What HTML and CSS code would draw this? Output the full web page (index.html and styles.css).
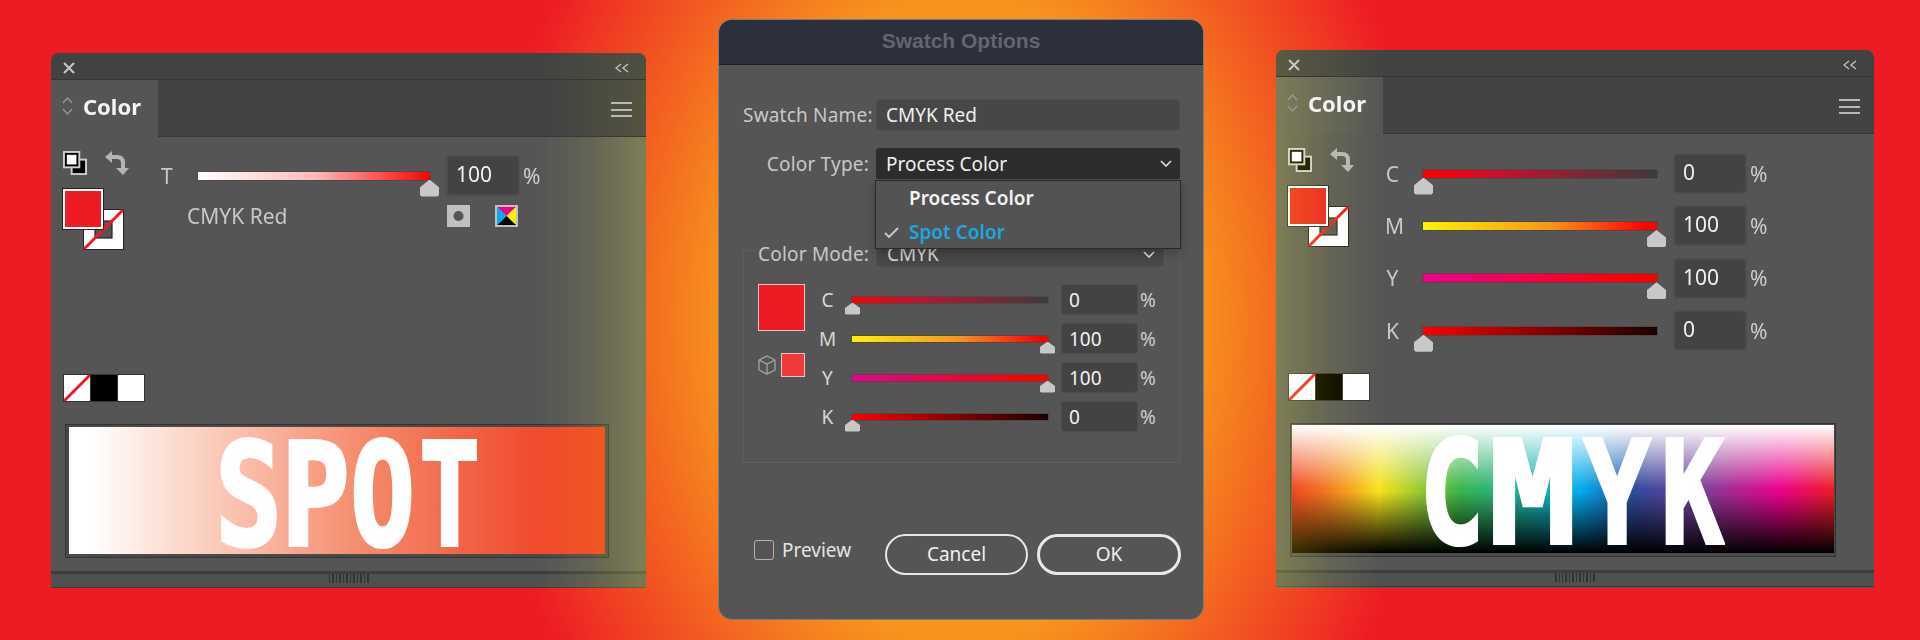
FILE: index.html
```html
<!DOCTYPE html>
<html>

<head>
    <meta charset="UTF-8">
    <title>Swatch Options</title>
    <link rel="stylesheet" href="styles.css">
</head>

<body>
    <div class="page">

        <!-- spot colour panel -->
        <div class="panel panel-spot">
            <div class="panel-title">
                <svg class="icon-close" viewBox="0 0 12 12"><path d="M1 1L11 11M11 1L1 11"/></svg>
                <svg class="icon-collapse" viewBox="0 0 14 10"><path d="M6 1L1 5L6 9M13 1L8 5L13 9"/></svg>
            </div>
            <div class="panel-tabs">
                <div class="tab">
                    <svg class="icon-updown" viewBox="0 0 11 18"><path d="M1 6L5.5 1L10 6M1 12L5.5 17L10 12"/></svg>
                    <span>Color</span>
                </div>
                <div class="tab-rest">
                    <div class="hamburger"><i></i><i></i><i></i></div>
                </div>
            </div>
            <div class="panel-body">
                <div class="tools">
                    <div class="tool-icons">
                        <svg class="icon-default" viewBox="0 0 25 25"><rect x="9" y="9" width="15" height="15" fill="#000" stroke="#ccc" stroke-width="2"/><rect x="1" y="1" width="16" height="16" fill="#000" stroke="#ccc" stroke-width="2"/><rect x="4" y="4" width="10" height="10" fill="#fff"/></svg>
                        <svg class="icon-swap" viewBox="0 0 24 24"><path d="M6 6H12Q18 6 18 12V19" fill="none" stroke="#b4b4b4" stroke-width="4"/><path d="M0 6L7 0V12ZM11 17H24L18 24Z" fill="#b4b4b4"/></svg>
                    </div>
                    <div class="swatch-stack">
                        <svg class="stroke-swatch" viewBox="0 0 41 41"><rect x=".5" y=".5" width="40" height="40" fill="#fff" stroke="#222"/><rect x="12" y="12" width="17" height="17" fill="#555" stroke="#222" stroke-width="1.2"/><path d="M1 40L40 1" stroke="#ed1c24" stroke-width="3"/></svg>
                        <div class="fill-swatch"></div>
                    </div>
                </div>
                <div class="controls">
                    <div class="row row-big">
                        <span class="row-label">T</span>
                        <div class="slider slider-t"><div class="thumb thumb-end"></div></div>
                        <div class="num">100</div>
                        <span class="pct">%</span>
                    </div>
                    <div class="tint-info">
                        <span class="tint-name">CMYK Red</span>
                        <svg class="mode-icon" viewBox="0 0 23 22"><rect width="23" height="22" fill="#c0c0c0"/><circle cx="11.5" cy="11" r="5" fill="#555"/></svg>
                        <svg class="mode-icon" viewBox="0 0 23 22"><rect width="23" height="22" fill="#c0c0c0"/><path d="M2 2H21L11.5 11Z" fill="#ec008c"/><path d="M21 2V20L11.5 11Z" fill="#fff200"/><path d="M21 20H2L11.5 11Z" fill="#000"/><path d="M2 20V2L11.5 11Z" fill="#00aeef"/></svg>
                    </div>
                </div>
            </div>
            <div class="quick-swatches">
                <svg class="quick-none" viewBox="0 0 26 26" preserveAspectRatio="none"><rect width="26" height="26" fill="#fff"/><path d="M0 26L26 0" stroke="#ed1c24" stroke-width="3"/></svg>
                <div class="quick-black"></div>
                <div class="quick-white"></div>
            </div>
            <div class="preview-frame">
                <div class="preview preview-spot">
                    <div class="word word-spot"><span class="l-s">S</span><span class="l-p">P</span><span class="l-o">O</span><span class="l-t">T</span></div>
                </div>
            </div>
            <div class="panel-foot"><div class="grip"></div></div>
            <div class="tint-overlay"></div>
        </div>

        <!-- dialog -->
        <div class="dialog">
            <div class="dialog-head">Swatch Options</div>
            <div class="dialog-body">
                <div class="form-row">
                    <label class="form-label">Swatch Name:</label>
                    <div class="text-field">CMYK Red</div>
                </div>
                <div class="form-row form-row-type">
                    <label class="form-label">Color Type:</label>
                    <div class="select select-open">
                        <span>Process Color</span>
                        <svg class="chevron" viewBox="0 0 12 7"><path d="M1 1L6 6L11 1"/></svg>
                    </div>
                    <ul class="menu">
                        <li>Process Color</li>
                        <li class="menu-on">
                            <svg class="check" viewBox="0 0 15 11"><path d="M1 6L5 10L14 1"/></svg>
                            Spot Color
                        </li>
                    </ul>
                </div>

                <div class="group">
                    <div class="form-row form-row-mode">
                        <label class="form-label">Color Mode:</label>
                        <div class="select select-mode">
                            <span>CMYK</span>
                            <svg class="chevron" viewBox="0 0 12 7"><path d="M1 1L6 6L11 1"/></svg>
                        </div>
                    </div>
                    <div class="group-main">
                        <div class="group-swatches">
                            <div class="big-swatch"></div>
                            <div class="gamut">
                                <svg class="icon-cube" viewBox="0 0 18 20"><path d="M9 1L17 5V15L9 19L1 15V5ZM1 5L9 9L17 5M9 9V19"/></svg>
                                <div class="small-swatch"></div>
                            </div>
                        </div>
                        <div class="group-rows">
                            <div class="row row-small">
                                <span class="row-label">C</span>
                                <div class="slider slider-c"><div class="thumb thumb-start"></div></div>
                                <div class="num">0</div>
                                <span class="pct">%</span>
                            </div>
                            <div class="row row-small">
                                <span class="row-label">M</span>
                                <div class="slider slider-m"><div class="thumb thumb-end"></div></div>
                                <div class="num">100</div>
                                <span class="pct">%</span>
                            </div>
                            <div class="row row-small">
                                <span class="row-label">Y</span>
                                <div class="slider slider-y"><div class="thumb thumb-end"></div></div>
                                <div class="num">100</div>
                                <span class="pct">%</span>
                            </div>
                            <div class="row row-small">
                                <span class="row-label">K</span>
                                <div class="slider slider-k"><div class="thumb thumb-start"></div></div>
                                <div class="num">0</div>
                                <span class="pct">%</span>
                            </div>
                        </div>
                    </div>
                </div>

                <div class="dialog-foot">
                    <div class="preview-check">
                        <div class="checkbox"></div>
                        <span>Preview</span>
                    </div>
                    <div class="buttons">
                        <div class="btn">Cancel</div>
                        <div class="btn btn-ok">OK</div>
                    </div>
                </div>
            </div>
        </div>

        <!-- cmyk colour panel -->
        <div class="panel panel-cmyk">
            <div class="panel-title">
                <svg class="icon-close" viewBox="0 0 12 12"><path d="M1 1L11 11M11 1L1 11"/></svg>
                <svg class="icon-collapse" viewBox="0 0 14 10"><path d="M6 1L1 5L6 9M13 1L8 5L13 9"/></svg>
            </div>
            <div class="panel-tabs">
                <div class="tab">
                    <svg class="icon-updown" viewBox="0 0 11 18"><path d="M1 6L5.5 1L10 6M1 12L5.5 17L10 12"/></svg>
                    <span>Color</span>
                </div>
                <div class="tab-rest">
                    <div class="hamburger"><i></i><i></i><i></i></div>
                </div>
            </div>
            <div class="panel-body">
                <div class="tools">
                    <div class="tool-icons">
                        <svg class="icon-default" viewBox="0 0 25 25"><rect x="9" y="9" width="15" height="15" fill="#000" stroke="#ccc" stroke-width="2"/><rect x="1" y="1" width="16" height="16" fill="#000" stroke="#ccc" stroke-width="2"/><rect x="4" y="4" width="10" height="10" fill="#fff"/></svg>
                        <svg class="icon-swap" viewBox="0 0 24 24"><path d="M6 6H12Q18 6 18 12V19" fill="none" stroke="#b4b4b4" stroke-width="4"/><path d="M0 6L7 0V12ZM11 17H24L18 24Z" fill="#b4b4b4"/></svg>
                    </div>
                    <div class="swatch-stack">
                        <svg class="stroke-swatch" viewBox="0 0 41 41"><rect x=".5" y=".5" width="40" height="40" fill="#fff" stroke="#222"/><rect x="12" y="12" width="17" height="17" fill="#555" stroke="#222" stroke-width="1.2"/><path d="M1 40L40 1" stroke="#ed1c24" stroke-width="3"/></svg>
                        <div class="fill-swatch"></div>
                    </div>
                </div>
                <div class="controls">
                    <div class="row row-big">
                        <span class="row-label">C</span>
                        <div class="slider slider-c"><div class="thumb thumb-start"></div></div>
                        <div class="num">0</div>
                        <span class="pct">%</span>
                    </div>
                    <div class="row row-big">
                        <span class="row-label">M</span>
                        <div class="slider slider-m"><div class="thumb thumb-end"></div></div>
                        <div class="num">100</div>
                        <span class="pct">%</span>
                    </div>
                    <div class="row row-big">
                        <span class="row-label">Y</span>
                        <div class="slider slider-y"><div class="thumb thumb-end"></div></div>
                        <div class="num">100</div>
                        <span class="pct">%</span>
                    </div>
                    <div class="row row-big">
                        <span class="row-label">K</span>
                        <div class="slider slider-k"><div class="thumb thumb-start"></div></div>
                        <div class="num">0</div>
                        <span class="pct">%</span>
                    </div>
                </div>
            </div>
            <div class="quick-swatches">
                <svg class="quick-none" viewBox="0 0 26 26" preserveAspectRatio="none"><rect width="26" height="26" fill="#fff"/><path d="M0 26L26 0" stroke="#ed1c24" stroke-width="3"/></svg>
                <div class="quick-black"></div>
                <div class="quick-white"></div>
            </div>
            <div class="preview-frame">
                <div class="preview preview-cmyk">
                    <div class="word word-cmyk"><span class="l-c">C</span><span class="l-m">M</span><span class="l-y">Y</span><span class="l-k">K</span></div>
                </div>
            </div>
            <div class="panel-foot"><div class="grip"></div></div>
            <div class="tint-overlay"></div>
        </div>

    </div>
</body>

</html>
```

FILE: styles.css
```css
* {
    margin: 0;
    padding: 0;
    list-style: none;
    box-sizing: border-box;
}

body {
    font-family: "Noto Sans", "Liberation Sans", sans-serif;
    color: #eee;
    overflow: hidden;
}

.page {
    width: 1920px;
    height: 640px;
    display: flex;
    align-items: flex-start;
    padding-left: 51px;
    gap: 72px;
    background: radial-gradient(ellipse 470px 640px at 960px 320px, #f7941e 50%, #ed1c24 100%);
}

/* panels */
.panel {
    position: relative;
    z-index: 0;
    width: 595px;
    height: 535px;
    margin-top: 53px;
    background: #555;
    border-radius: 8px 8px 0 0;
    overflow: hidden;
}

.panel-cmyk {
    width: 598px;
    height: 538px;
    margin-top: 50px;
}

.panel-title {
    height: 27px;
    background: #424242;
    border-bottom: 1px solid #363636;
    display: flex;
    align-items: center;
    justify-content: space-between;
    padding: 4px 17px 0 12px;
}

.panel-spot .panel-title {
    background: linear-gradient(to left, #505040, #424242 18%);
}

.panel-cmyk .panel-title {
    background: linear-gradient(to right, #5a5a42, #424242 18%);
}

.icon-close {
    width: 12px;
    height: 12px;
    fill: none;
    stroke: #c8c8c8;
    stroke-width: 2;
}

.icon-collapse {
    width: 14px;
    height: 10px;
    fill: none;
    stroke: #c0c0c0;
    stroke-width: 1.4;
}

.panel-tabs {
    height: 57px;
    display: flex;
}

.tab {
    width: 107px;
    display: flex;
    align-items: center;
    gap: 10px;
    padding: 0 0 5px 11px;
    background: #555;
    font-size: 22px;
    font-weight: 700;
    color: #f4f4f4;
}

.panel-cmyk .tab {
    background: linear-gradient(to right, #7c7c58, #555 100%);
}

.icon-updown {
    width: 11px;
    height: 18px;
    fill: none;
    stroke: #9a9a9a;
    stroke-width: 1.2;
}

.tab-rest {
    flex: 1;
    background: #434343;
    border-bottom: 1px solid #383838;
    display: flex;
    align-items: center;
    justify-content: flex-end;
    padding: 3px 14px 0 0;
}

.panel-spot .tab-rest {
    background: linear-gradient(to left, #54543f, #434343 18%);
}

.hamburger {
    width: 21px;
    display: flex;
    flex-direction: column;
    gap: 4.5px;
}

.hamburger i {
    display: block;
    height: 2px;
    background: #b8b8b8;
}

.panel-body {
    height: 237px;
    display: flex;
    padding: 14px 0 0 12px;
}

.panel-cmyk .panel-body {
    height: 239px;
}

.tools {
    width: 97px;
}

.tool-icons {
    display: flex;
    gap: 18px;
    height: 25px;
}

.icon-default,
.icon-swap {
    width: 24px;
    height: 24px;
}

.swatch-stack {
    position: relative;
    width: 61px;
    height: 61px;
    margin-top: 13px;
}

.fill-swatch {
    position: absolute;
    left: 0;
    top: 0;
    width: 40px;
    height: 40px;
    background: #ed1c24;
    border: 2px solid #fff;
    box-shadow: 0 0 0 1px #222;
}

.stroke-swatch {
    position: absolute;
    right: 0;
    bottom: 0;
    width: 41px;
    height: 41px;
}

.controls {
    padding-top: 4px;
}

.panel-cmyk .controls {
    padding-top: 5px;
}

.row {
    display: flex;
    align-items: center;
}

.row-big {
    height: 41px;
    margin-bottom: 11.4px;
    font-size: 21px;
}

.row-big .row-label {
    width: 38px;
    padding-left: 1px;
    color: #c8c8c8;
}

.panel-cmyk .row-big .row-label {
    text-align: center;
    padding: 0 23px 0 0;
}

.slider {
    position: relative;
    height: 8px;
    box-shadow: 0 0 0 1px #4a4a4a;
}

.row-big .slider {
    width: 232px;
}

.panel-cmyk .row-big .slider {
    width: 234px;
}

.row-small .slider {
    width: 196px;
    height: 6px;
}

.slider-t { background: linear-gradient(to right, #fff, #fbb 50%, #f00); }
.slider-c { background: linear-gradient(to right, #f00, #c8102e 30%, #3d3a3a); }
.slider-m { background: linear-gradient(to right, #fff200, #f7941e 55%, #f00 95%); }
.slider-y { background: linear-gradient(to right, #ec008c, #f00 90%); }
.slider-k { background: linear-gradient(to right, #f00, #1a0000); }

.thumb {
    position: absolute;
    top: 100%;
    width: 19px;
    height: 17px;
    background: #c8c8c8;
    clip-path: polygon(50% 0, 100% 45%, 100% 90%, 92% 100%, 8% 100%, 0 90%, 0 45%);
}

.thumb-start { left: -9px; }
.thumb-end { right: -9px; }

.row-small .thumb {
    width: 15px;
    height: 12px;
}

.row-small .thumb-start { left: -7px; }
.row-small .thumb-end { right: -7px; }

.num {
    margin-left: 16px;
    width: 74px;
    height: 41px;
    line-height: 35px;
    padding-left: 8px;
    background: #434343;
    border: 2px solid #4d4d4d;
    border-radius: 4px;
    color: #f2f2f2;
}

.pct {
    margin-left: 3px;
    color: #cfcfcf;
}

.tint-info {
    display: flex;
    align-items: center;
    margin-top: -5px;
    padding-left: 27px;
}

.tint-name {
    width: 260px;
    font-size: 21px;
    color: #c8c8c8;
}

.mode-icon {
    width: 23px;
    height: 22px;
    margin-right: 25px;
}

.quick-swatches {
    display: flex;
    gap: 1px;
    width: 82px;
    height: 28px;
    margin-left: 12px;
    padding: 1px;
    background: #333;
}

.quick-swatches > * {
    flex: 1;
    height: 26px;
    min-width: 0;
}

.quick-black { background: #000; }
.quick-white { background: #fff; }

.preview-frame {
    width: 544px;
    height: 134px;
    margin: 22px 0 0 14px;
    padding: 2px 3px 3px;
    border: 1px solid #333;
    background: #4a4a4a;
}

.panel-cmyk .preview-frame {
    width: 546px;
    margin-left: 14px;
    padding: 1px 1px 3px;
}

.preview {
    height: 100%;
    display: flex;
    align-items: center;
    justify-content: center;
}

.preview-spot {
    background: linear-gradient(to right, #fff 4%, #fbd0c0 25%, #f58a6c 55%, #f04e30 85%, #ef4023);
}

.preview-cmyk {
    background:
        linear-gradient(to bottom, #fff, rgba(255, 255, 255, 0) 50%, rgba(0, 0, 0, 0) 52%, #000),
        linear-gradient(to right, #ed1c24, #f7e21c 16%, #39b54a 31%, #00aeef 53%, #2e4a9e 63%, #7f3f98 76%, #ec008c 90%, #ed1c24);
}

/* the big words: one stretched glyph per box, letter widths differ */
.word {
    display: flex;
    margin: 10px 0 0 23px;
    font-family: "DejaVu Sans Mono", "Liberation Mono", monospace;
    font-size: 142px;
    font-weight: 700;
    line-height: 0.8;
    color: #fff;
    -webkit-text-stroke: 4px #fff;
}

.word span {
    display: flex;
    justify-content: center;
    width: 67px;
    white-space: nowrap;
}

.word .l-s { transform: scaleX(0.78); }
.word .l-p { transform: scaleX(0.8); }
.word .l-o { transform: scaleX(0.75); }
.word .l-t { transform: scaleX(0.71); }
.word .l-c { width: 66px; transform: scaleX(0.76); }
.word .l-m { width: 95px; transform: scaleX(1.02); }
.word .l-y { width: 74px; transform: scaleX(0.78); }
.word .l-k { width: 77px; transform: scaleX(0.73); }

.panel-foot {
    margin-top: 13px;
    height: 17px;
    background: #505050;
    border-top: 3px solid #3d3d3d;
    border-bottom: 1px solid #3a3a3a;
    display: flex;
    justify-content: center;
}

.grip {
    width: 40px;
    height: 9px;
    background: repeating-linear-gradient(to right, #333 0 1.5px, transparent 1.5px 3.5px);
}

/* olive glow bleeding through the panels */
.tint-overlay {
    position: absolute;
    top: 84px;
    bottom: 0;
    width: 105px;
    mix-blend-mode: screen;
    pointer-events: none;
}

.panel-spot .tint-overlay {
    right: 0;
    background: linear-gradient(to left, #3b3b00 4%, #181800 50%, #000);
}

.panel-cmyk .tint-overlay {
    left: 0;
    background: linear-gradient(to right, #3b3b00 4%, #181800 50%, #000);
}

/* dialog */
.dialog {
    width: 486px;
    height: 601px;
    margin-top: 19px;
    background: #555;
    border: 1px solid #7c7c7c;
    border-radius: 14px;
    overflow: hidden;
}

.dialog-head {
    height: 45px;
    line-height: 41px;
    text-align: center;
    background: #2c2f3c;
    border-bottom: 1px solid #1c1c22;
    font-family: "Liberation Sans", Arial, sans-serif;
    font-size: 21px;
    font-weight: 700;
    color: #63666f;
}

.dialog-body {
    padding: 34px 23px 0 24px;
    font-size: 19px;
}

.form-row {
    display: flex;
    align-items: center;
    gap: 7px;
}

.form-row-type {
    position: relative;
    margin-top: 17px;
}

.form-label {
    width: 126px;
    text-align: right;
    color: #c8c8c8;
    white-space: nowrap;
    letter-spacing: 0.2px;
}

.text-field {
    width: 304px;
    height: 32px;
    line-height: 31px;
    padding-left: 9px;
    background: #474747;
    border: 1px solid #4f4f4f;
    border-radius: 3px;
    color: #f0f0f0;
}

.select {
    display: flex;
    align-items: center;
    justify-content: space-between;
    padding: 0 8px 0 10px;
    border-radius: 3px;
}

.select-open {
    width: 304px;
    height: 31px;
    background: #2d2d2d;
    color: #f0f0f0;
}

.select-mode {
    width: 288px;
    height: 26px;
    background: #484848;
    border: 1px solid #4f4f4f;
    color: #d8d8d8;
}

.chevron {
    width: 12px;
    height: 7px;
    fill: none;
    stroke: #e0e0e0;
    stroke-width: 1.6;
}

.menu {
    position: absolute;
    z-index: 2;
    left: 132px;
    top: 32px;
    width: 306px;
    height: 69px;
    background: #535353;
    border: 1px solid #2a2a2a;
    box-shadow: 0 3px 10px rgba(0, 0, 0, 0.3);
    font-weight: 600;
}

.menu li {
    position: relative;
    height: 34px;
    line-height: 34px;
    padding-left: 33px;
    color: #f2f2f2;
}

.menu .menu-on {
    color: #1aa7e4;
}

.check {
    position: absolute;
    left: 8px;
    top: 12px;
    width: 15px;
    height: 11px;
    fill: none;
    stroke: #c8c8c8;
    stroke-width: 2;
}

.group {
    height: 213px;
    margin-top: 71px;
    padding: 0 14px;
    border: 1px solid #5e5e5e;
    border-radius: 2px;
}

.form-row-mode {
    margin-top: -10px;
    gap: 9px;
}

.form-row-mode .form-label {
    width: 109px;
}

.group-main {
    display: flex;
    margin-top: 17px;
}

.group-swatches {
    width: 47px;
}

.big-swatch {
    height: 47px;
    background: #ed1c24;
    border: 1px solid #e9c6c6;
}

.gamut {
    display: flex;
    align-items: center;
    justify-content: space-between;
    margin-top: 22px;
}

.icon-cube {
    width: 18px;
    height: 20px;
    fill: none;
    stroke: #a8a8a8;
    stroke-width: 1.2;
}

.small-swatch {
    width: 24px;
    height: 24px;
    background: #ef3a3a;
    border: 1px solid #e9c6c6;
}

.row-small {
    height: 31px;
    margin-bottom: 8px;
}

.row-small .row-label {
    width: 47px;
    padding-right: 2px;
    text-align: center;
    color: #d8d8d8;
}

.row-small .pct {
    margin-left: 2px;
}

.row-small .num {
    margin-left: 13px;
    width: 77px;
    height: 31px;
    line-height: 30px;
    padding-left: 7px;
    border-width: 1px;
    border-radius: 3px;
}

.dialog-foot {
    display: flex;
    justify-content: space-between;
    margin: 71px -1px 0 11px;
}

.preview-check {
    display: flex;
    align-items: center;
    gap: 8px;
    height: 32px;
    color: #e4e4e4;
}

.checkbox {
    width: 20px;
    height: 20px;
    border: 1px solid #b4b4b4;
    border-radius: 3px;
}

.buttons {
    display: flex;
    gap: 9px;
}

.btn {
    width: 143px;
    height: 41px;
    line-height: 37px;
    text-align: center;
    border: 2px solid #e8e8e8;
    border-radius: 21px;
    color: #f0f0f0;
}

.btn-ok {
    width: 144px;
    line-height: 35px;
    border-width: 3px;
}
```
